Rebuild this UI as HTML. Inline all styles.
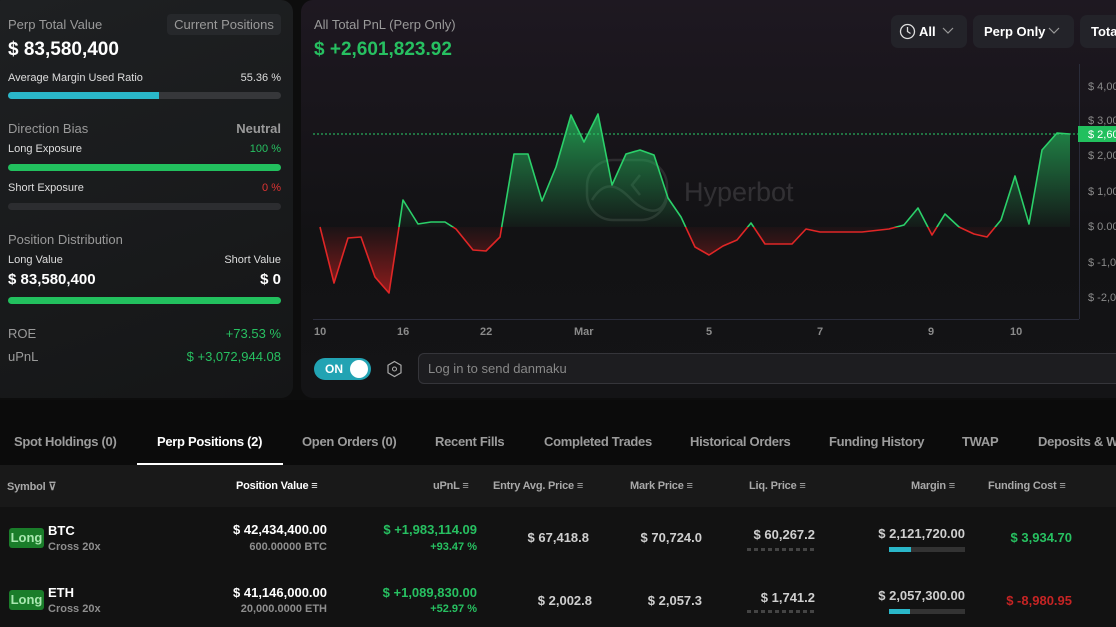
<!DOCTYPE html>
<html><head><meta charset="utf-8"><style>
*{margin:0;padding:0;box-sizing:border-box}
html,body{width:1116px;height:627px;overflow:hidden}
body{background:#0d0d0d;font-family:"Liberation Sans",sans-serif;color:#fff;position:relative}
.a{position:absolute;white-space:nowrap}
.g{color:#27c061}.r{color:#d33}.m{color:#9a9a9a}
.bar{position:absolute;height:7px;border-radius:4px;background:#36373a}
.hd{font-size:11px;color:#a8a8a8;font-weight:bold;letter-spacing:-0.2px}
.tb{font-size:13px;font-weight:bold;color:#9c9c9c;letter-spacing:-0.3px}
.num{font-size:13px;font-weight:bold;color:#cfcfcf;text-align:right}
.sm{font-size:11px;font-weight:bold;color:#8e8e8e;text-align:right}
.lng{position:absolute;background:#1a7d2a;color:#a9e8b0;font-size:13px;font-weight:bold;border-radius:3px;width:35px;height:20px;line-height:20px;text-align:center}
</style></head><body>
<div class="a" style="left:-10px;top:0;width:303px;height:398px;background:linear-gradient(160deg,#1e2022,#151617);border-radius:12px"></div>
<div class="a m" style="left:8px;top:17px;font-size:13px">Perp Total Value</div>
<div class="a" style="left:167px;top:14px;width:114px;height:21px;background:#26282b;border-radius:4px;font-size:13px;color:#9a9a9a;line-height:21px;text-align:center">Current Positions</div>
<div class="a" style="left:8px;top:39px;font-size:19px;font-weight:bold">$ 83,580,400</div>
<div class="a" style="left:8px;top:72px;font-size:11px;color:#ddd">Average Margin Used Ratio</div>
<div class="a" style="right:835px;top:72px;font-size:11px;color:#ddd">55.36 %</div>
<div class="bar" style="left:8px;top:92px;width:273px"></div>
<div class="bar" style="left:8px;top:92px;width:151px;background:#2ab7c9;border-radius:4px 0 0 4px"></div>
<div class="a m" style="left:8px;top:121px;font-size:13px">Direction Bias</div>
<div class="a" style="right:835px;top:121px;font-size:13px;font-weight:bold;color:#9a9a9a">Neutral</div>
<div class="a" style="left:8px;top:143px;font-size:11px;color:#ddd">Long Exposure</div>
<div class="a g" style="right:835px;top:143px;font-size:11px">100 %</div>
<div class="bar" style="left:8px;top:164px;width:273px;background:#22c05e"></div>
<div class="a" style="left:8px;top:182px;font-size:11px;color:#ddd">Short Exposure</div>
<div class="a r" style="right:835px;top:182px;font-size:11px">0 %</div>
<div class="bar" style="left:8px;top:203px;width:273px;background:#2c2d30"></div>
<div class="a m" style="left:8px;top:232px;font-size:13px">Position Distribution</div>
<div class="a" style="left:8px;top:254px;font-size:11px;color:#ddd">Long Value</div>
<div class="a" style="right:835px;top:254px;font-size:11px;color:#ddd">Short Value</div>
<div class="a" style="left:8px;top:271px;font-size:15px;font-weight:bold">$ 83,580,400</div>
<div class="a" style="right:835px;top:271px;font-size:15px;font-weight:bold">$ 0</div>
<div class="bar" style="left:8px;top:297px;width:273px;background:#22c05e"></div>
<div class="a m" style="left:8px;top:326px;font-size:13px">ROE</div>
<div class="a g" style="right:835px;top:326px;font-size:13px">+73.53 %</div>
<div class="a m" style="left:8px;top:349px;font-size:13px">uPnL</div>
<div class="a g" style="right:835px;top:349px;font-size:13px">$ +3,072,944.08</div>
<div class="a" style="left:301px;top:0;width:815px;height:398px;background:linear-gradient(180deg,#1e1821,#121214 60%,#141416);border-radius:12px 0 0 12px"></div>
<div class="a m" style="left:314px;top:17px;font-size:13px">All Total PnL (Perp Only)</div>
<div class="a g" style="left:314px;top:39px;font-size:19px;font-weight:bold">$ +2,601,823.92</div>
<div class="a" style="left:891px;top:15px;width:76px;height:33px;background:#232329;border-radius:7px"></div>
<svg class="a" style="left:899px;top:23px" width="17" height="17" viewBox="0 0 17 17"><circle cx="8.5" cy="8.5" r="7" fill="none" stroke="#ddd" stroke-width="1.3"/><path d="M8.5 4v4.5l3 2" fill="none" stroke="#ddd" stroke-width="1.3"/></svg>
<div class="a" style="left:919px;top:24px;font-size:13px;font-weight:bold">All</div>
<svg class="a" style="left:942px;top:27px" width="12" height="8"><path d="M1 1l5 5 5-5" fill="none" stroke="#999" stroke-width="1.2"/></svg>
<div class="a" style="left:973px;top:15px;width:101px;height:33px;background:#232329;border-radius:7px"></div>
<div class="a" style="left:984px;top:24px;font-size:13px;font-weight:bold">Perp Only</div>
<svg class="a" style="left:1048px;top:27px" width="12" height="8"><path d="M1 1l5 5 5-5" fill="none" stroke="#999" stroke-width="1.2"/></svg>
<div class="a" style="left:1080px;top:15px;width:36px;height:33px;background:#232329;border-radius:7px 0 0 7px;overflow:hidden"><div style="position:absolute;left:11px;top:9px;font-size:13px;font-weight:bold">Total</div></div>
<svg class="a" style="left:0;top:0" width="1116" height="400">
<defs>
<linearGradient id="gg" x1="0" y1="114" x2="0" y2="227" gradientUnits="userSpaceOnUse"><stop offset="0" stop-color="#22a955" stop-opacity=".85"/><stop offset="1" stop-color="#22a955" stop-opacity=".05"/></linearGradient>
<linearGradient id="rg" x1="0" y1="227" x2="0" y2="293" gradientUnits="userSpaceOnUse"><stop offset="0" stop-color="#c02020" stop-opacity=".05"/><stop offset="1" stop-color="#c02020" stop-opacity=".7"/></linearGradient>
<clipPath id="top"><rect x="300" y="0" width="800" height="227"/></clipPath>
<clipPath id="bot"><rect x="300" y="227" width="800" height="200"/></clipPath>
</defs>
<g opacity=".14" fill="none" stroke="#bbb" stroke-width="2.5"><rect x="587" y="160" width="80" height="60" rx="26"/><path d="M592 200c15-25 30-10 40 0s30 20 35-5"/><path d="M640 175l-8 10 8 10"/></g>
<text x="684" y="201" font-size="27" fill="#ffffff" opacity=".12" font-family="Liberation Sans">Hyperbot</text>
<polygon clip-path="url(#top)" fill="url(#gg)" points="320,227 334,283 348,238 361,237 375,277 389,293 399,227 403,200 418,224 431,222 445,222 456,229 473,250 486,251 500,237 514,154 528,154 542,201 556,167 571,115 584,142 598,114 612,185 626,154 640,150 654,155 668,198 681,217 695,247 709,255 723,246 737,240 751,223 765,244 792,244 806,229 820,232 862,232 889,229 904,225 918,208 932,235 945,214 959,227 974,234 987,237 1001,220 1015,176 1029,224 1042,150 1057,133 1070,134 1070,227"/>
<polygon clip-path="url(#bot)" fill="url(#rg)" points="320,227 334,283 348,238 361,237 375,277 389,293 399,227 403,200 418,224 431,222 445,222 456,229 473,250 486,251 500,237 514,154 528,154 542,201 556,167 571,115 584,142 598,114 612,185 626,154 640,150 654,155 668,198 681,217 695,247 709,255 723,246 737,240 751,223 765,244 792,244 806,229 820,232 862,232 889,229 904,225 918,208 932,235 945,214 959,227 974,234 987,237 1001,220 1015,176 1029,224 1042,150 1057,133 1070,134 1070,227"/>
<g fill="none" stroke-width="1.6" stroke-linejoin="round">
<polyline clip-path="url(#top)" stroke="#2bd06a" points="320,227 334,283 348,238 361,237 375,277 389,293 399,227 403,200 418,224 431,222 445,222 456,229 473,250 486,251 500,237 514,154 528,154 542,201 556,167 571,115 584,142 598,114 612,185 626,154 640,150 654,155 668,198 681,217 695,247 709,255 723,246 737,240 751,223 765,244 792,244 806,229 820,232 862,232 889,229 904,225 918,208 932,235 945,214 959,227 974,234 987,237 1001,220 1015,176 1029,224 1042,150 1057,133 1070,134"/>
<polyline clip-path="url(#bot)" stroke="#e02626" points="320,227 334,283 348,238 361,237 375,277 389,293 399,227 403,200 418,224 431,222 445,222 456,229 473,250 486,251 500,237 514,154 528,154 542,201 556,167 571,115 584,142 598,114 612,185 626,154 640,150 654,155 668,198 681,217 695,247 709,255 723,246 737,240 751,223 765,244 792,244 806,229 820,232 862,232 889,229 904,225 918,208 932,235 945,214 959,227 974,234 987,237 1001,220 1015,176 1029,224 1042,150 1057,133 1070,134"/>
</g>
<line x1="313" y1="134" x2="1078" y2="134" stroke="#2bd06a" stroke-dasharray="2,2" stroke-width="1"/>
<line x1="313" y1="319.5" x2="1079" y2="319.5" stroke="#2a2c3a"/>
<line x1="1079.5" y1="64" x2="1079.5" y2="319" stroke="#2a2c3a"/>
<rect x="1078" y="126" width="40" height="16" fill="#22c05e"/>
<g font-size="11" fill="#8a8a8a" font-family="Liberation Sans">
<text x="1088" y="90">$ 4,000</text><text x="1088" y="124">$ 3,000</text><text x="1088" y="159">$ 2,000</text><text x="1088" y="195">$ 1,000</text><text x="1088" y="230">$ 0.00</text><text x="1088" y="266">$ -1,000</text><text x="1088" y="301">$ -2,000</text>
<text x="1088" y="138" fill="#fff">$ 2,601</text>
<g font-weight="bold"><text x="314" y="335">10</text><text x="397" y="335">16</text><text x="480" y="335">22</text><text x="574" y="335">Mar</text><text x="706" y="335">5</text><text x="817" y="335">7</text><text x="928" y="335">9</text><text x="1010" y="335">10</text></g>
</g>
</svg>
<div class="a" style="left:314px;top:358px;width:57px;height:22px;background:#22a3b3;border-radius:11px"></div>
<div class="a" style="left:325px;top:362px;font-size:12px;font-weight:bold">ON</div>
<div class="a" style="left:350px;top:360px;width:18px;height:18px;background:#fff;border-radius:50%"></div>
<svg class="a" style="left:386px;top:360px" width="17" height="18"><path d="M8.5 1.5l6.5 3.7v7.6l-6.5 3.7-6.5-3.7V5.2z" fill="none" stroke="#aaa" stroke-width="1.2"/><circle cx="8.5" cy="9" r="2" fill="none" stroke="#aaa" stroke-width="1.1"/></svg>
<div class="a" style="left:418px;top:353px;width:698px;height:31px;background:#1d1d20;border:1px solid #35353a;border-right:none;border-radius:6px 0 0 6px"></div>
<div class="a" style="left:428px;top:361px;font-size:13px;color:#888">Log in to send danmaku</div>
<div class="a" style="left:0;top:400px;width:1116px;height:65px;background:#0b0b0b"></div>
<div class="a tb" style="left:14px;top:434px">Spot Holdings (0)</div>
<div class="a tb" style="left:157px;top:434px;color:#fff">Perp Positions (2)</div>
<div class="a" style="left:137px;top:463px;width:146px;height:2px;background:#fff"></div>
<div class="a tb" style="left:302px;top:434px">Open Orders (0)</div>
<div class="a tb" style="left:435px;top:434px">Recent Fills</div>
<div class="a tb" style="left:544px;top:434px">Completed Trades</div>
<div class="a tb" style="left:690px;top:434px">Historical Orders</div>
<div class="a tb" style="left:829px;top:434px">Funding History</div>
<div class="a tb" style="left:962px;top:434px">TWAP</div>
<div class="a" style="left:1038px;top:434px;width:78px;overflow:hidden"><div class="tb">Deposits &amp; Withdrawals</div></div>
<div class="a" style="left:0;top:465px;width:1116px;height:42px;background:#191919"></div>
<div class="a" style="left:0;top:507px;width:1116px;height:120px;background:#121212"></div>
<div class="a hd" style="left:7px;top:480px">Symbol ⊽</div>
<div class="a hd" style="left:236px;top:480px;color:#fff">Position Value ≡</div>
<div class="a hd" style="left:433px;top:480px">uPnL ≡</div>
<div class="a hd" style="left:493px;top:480px">Entry Avg. Price ≡</div>
<div class="a hd" style="left:630px;top:480px">Mark Price ≡</div>
<div class="a hd" style="left:749px;top:480px">Liq. Price ≡</div>
<div class="a hd" style="left:911px;top:480px">Margin ≡</div>
<div class="a hd" style="left:988px;top:480px">Funding Cost ≡</div>
<div class="lng" style="left:9px;top:528px">Long</div>
<div class="a" style="left:48px;top:523px;font-size:13px;font-weight:bold">BTC</div>
<div class="a sm" style="left:48px;top:541px">Cross 20x</div>
<div class="a num" style="right:789px;top:522px;color:#fff">$ 42,434,400.00</div>
<div class="a sm" style="right:789px;top:541px">600.00000 BTC</div>
<div class="a num" style="right:639px;top:522px;color:#27c061">$ +1,983,114.09</div>
<div class="a sm" style="right:639px;top:541px;color:#27c061">+93.47 %</div>
<div class="a num" style="right:527px;top:530px">$ 67,418.8</div>
<div class="a num" style="right:414px;top:530px">$ 70,724.0</div>
<div class="a num" style="right:301px;top:527px">$ 60,267.2</div>
<div class="a" style="left:747px;top:548px;width:68px;height:3px;background:repeating-linear-gradient(90deg,#444 0 4px,transparent 4px 7px)"></div>
<div class="a num" style="right:151px;top:526px">$ 2,121,720.00</div>
<div class="a" style="left:889px;top:547px;width:76px;height:5px;background:#333"></div>
<div class="a" style="left:889px;top:547px;width:22px;height:5px;background:#2ab7c9"></div>
<div class="a num" style="right:44px;top:530px;color:#27c061">$ 3,934.70</div>
<div class="lng" style="left:9px;top:590px">Long</div>
<div class="a" style="left:48px;top:585px;font-size:13px;font-weight:bold">ETH</div>
<div class="a sm" style="left:48px;top:603px">Cross 20x</div>
<div class="a num" style="right:789px;top:585px;color:#fff">$ 41,146,000.00</div>
<div class="a sm" style="right:789px;top:603px">20,000.0000 ETH</div>
<div class="a num" style="right:639px;top:585px;color:#27c061">$ +1,089,830.00</div>
<div class="a sm" style="right:639px;top:603px;color:#27c061">+52.97 %</div>
<div class="a num" style="right:524px;top:593px">$ 2,002.8</div>
<div class="a num" style="right:414px;top:593px">$ 2,057.3</div>
<div class="a num" style="right:301px;top:590px">$ 1,741.2</div>
<div class="a" style="left:747px;top:610px;width:68px;height:3px;background:repeating-linear-gradient(90deg,#444 0 4px,transparent 4px 7px)"></div>
<div class="a num" style="right:151px;top:588px">$ 2,057,300.00</div>
<div class="a" style="left:889px;top:609px;width:76px;height:5px;background:#333"></div>
<div class="a" style="left:889px;top:609px;width:21px;height:5px;background:#2ab7c9"></div>
<div class="a num" style="right:44px;top:593px;color:#c62424">$ -8,980.95</div>
</body></html>
